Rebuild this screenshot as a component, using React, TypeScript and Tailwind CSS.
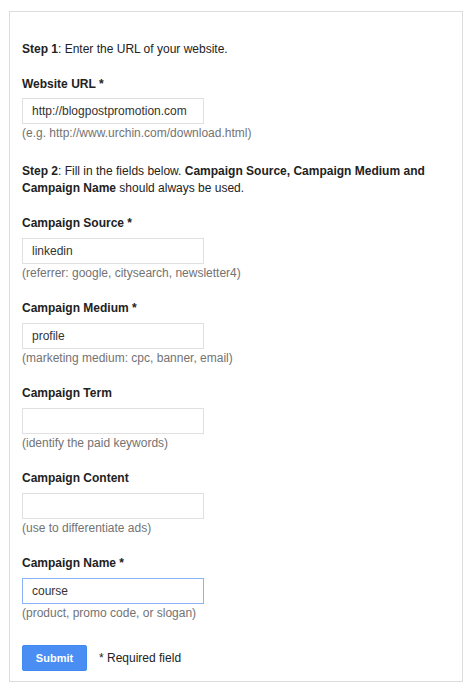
const font = { fontFamily: '"Liberation Sans", Arial, Helvetica, sans-serif' };

interface Field {
  label: string;
  value: string;
  hint: string;
  focused?: boolean;
}

const fields: Field[] = [
  { label: 'Campaign Source *', value: 'linkedin', hint: '(referrer: google, citysearch, newsletter4)' },
  { label: 'Campaign Medium *', value: 'profile', hint: '(marketing medium: cpc, banner, email)' },
  { label: 'Campaign Term', value: '', hint: '(identify the paid keywords)' },
  { label: 'Campaign Content', value: '', hint: '(use to differentiate ads)' },
  { label: 'Campaign Name *', value: 'course', hint: '(product, promo code, or slogan)', focused: true },
];

function FieldBlock({ field, first }: { field: Field; first?: boolean }) {
  return (
    <div className={first ? '' : 'mt-[19px]'}>
      <div className="h-[17px] text-[12px] leading-[17px] font-bold text-[#222]">{field.label}</div>
      <div
        className={
          'mt-[6px] flex h-[26px] w-[182px] items-center border px-[9px] text-[12px] text-[#333] ' +
          (field.focused ? 'border-[#8ab4f8]' : 'border-[#e0e0e0]')
        }
      >
        {field.value}
      </div>
      <div className="mt-[2px] h-[15px] text-[12px] leading-[15px] text-[#737373]">{field.hint}</div>
    </div>
  );
}

export default function App() {
  return (
    <div className="min-h-[692px] w-[474px] bg-white pt-[11px] pl-[9px]" style={font}>
      <div className="h-[671px] w-[454px] border border-[#dcdcdc] pl-[12px] pt-[29px]">
        <div className="h-[17px] text-[12px] leading-[17px] text-[#222]">
          <b>Step 1</b>: Enter the URL of your website.
        </div>

        <div className="mt-[18px]">
          <div className="h-[17px] text-[12px] leading-[17px] font-bold text-[#222]">Website URL *</div>
          <div className="mt-[5px] flex h-[26px] w-[182px] items-center border border-[#e0e0e0] px-[9px] text-[12px] text-[#333]">
            http://blogpostpromotion.com
          </div>
          <div className="mt-[2px] h-[15px] text-[12px] leading-[15px] text-[#737373]">
            (e.g. http://www.urchin.com/download.html)
          </div>
        </div>

        <div className="mt-[22px] w-[425px] text-[12px] leading-[17px] text-[#222]">
          <p>
            <b>Step 2</b>: Fill in the fields below. <b>Campaign Source, Campaign Medium and</b>
          </p>
          <p>
            <b>Campaign Name</b> should always be used.
          </p>
        </div>

        <div className="mt-[18px]">
          {fields.map((f, i) => (
            <FieldBlock key={f.label} field={f} first={i === 0} />
          ))}
        </div>

        <div className="mt-[24px] flex items-center">
          <button className="h-[26px] w-[65px] rounded-[2px] border border-[#3d8af0] bg-[#4a8ef3] text-[11px] font-bold text-white">
            Submit
          </button>
          <span className="ml-[12px] text-[12px] text-[#222]">* Required field</span>
        </div>
      </div>
    </div>
  );
}
